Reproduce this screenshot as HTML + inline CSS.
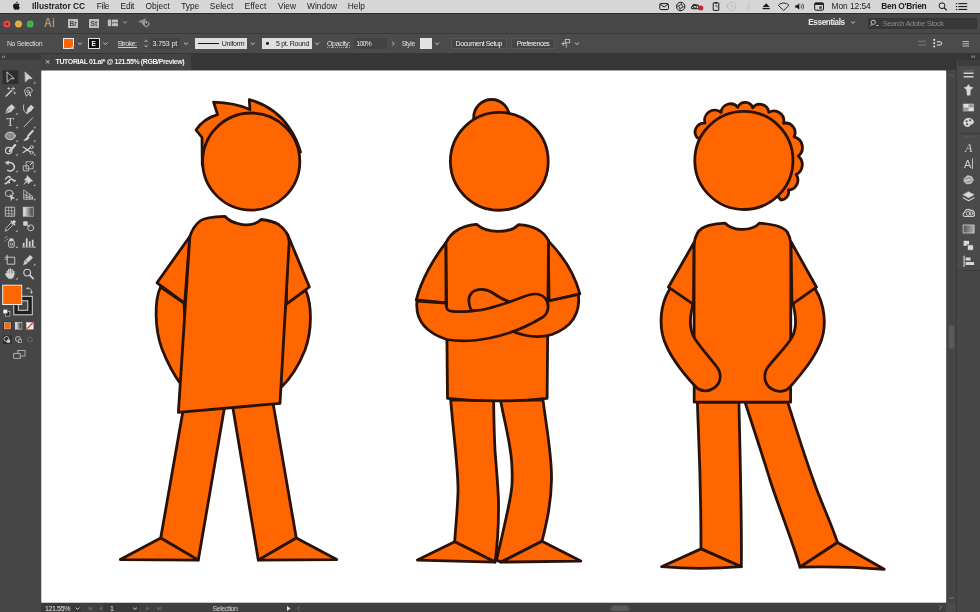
<!DOCTYPE html>
<html lang="en">
<head>
<meta charset="utf-8">
<title>Illustrator CC - TUTORIAL 01.ai</title>
<style>
*{box-sizing:border-box;margin:0;padding:0}
html,body{width:980px;height:612px;overflow:hidden;background:#474747}
body{position:relative;font-family:"Liberation Sans",sans-serif;font-size:8px;color:#e6e6e6}
.abs,.t{position:absolute}
.t{white-space:nowrap;line-height:10px;height:10px}
#menubar{position:absolute;left:0;top:0;width:980px;height:13px;background:#d6d6d6}
#menubar .t{color:#1c1c1c}
#appbar{position:absolute;left:0;top:13px;width:980px;height:21px;background:#484848;border-top:1px solid #2c2c2c}
#ctrl{position:absolute;left:0;top:33px;width:980px;height:20px;background:#4b4b4b;border-top:1px solid #3a3a3a}
#tabbar{position:absolute;left:0;top:53px;width:980px;height:17px;background:#363636}
#tab{position:absolute;left:41px;top:1px;width:150px;height:16px;background:#434343}
#tools{position:absolute;left:0;top:60px;width:41px;height:552px;background:#464646}
#toolshead{position:absolute;left:0;top:53px;width:41px;height:7px;background:#3b3b3b}
#vscroll{position:absolute;left:946px;top:70px;width:10px;height:542px;background:#454545;border-left:1px solid #3c3c3c}
#rpanel{position:absolute;left:956px;top:60px;width:24px;height:552px;background:#474747;border-left:1px solid #3a3a3a}
#rdock{position:absolute;left:958px;top:66px;width:22px;height:205px;background:#4a4a4a;border-bottom:1px solid #3a3a3a}
#status{position:absolute;left:41px;top:602px;width:905px;height:10px;background:#404040}
</style>
</head>
<body>
<div id="menubar"></div>
<div id="appbar"></div>
<div id="ctrl"></div>
<div id="tabbar"><div id="tab"></div></div>
<div id="toolshead"></div>
<div id="tools"></div>
<div id="vscroll"></div>
<div id="rpanel"></div>
<div id="rdock"></div>
<div id="status"></div>
<div class="abs" style="left:68.3px;top:19.2px;width:9.8px;height:8.8px;background:#bdbdbd"></div><div class="abs" style="left:89px;top:19.2px;width:9.8px;height:8.8px;background:#bdbdbd"></div><div class="abs" style="left:868px;top:18px;width:108.5px;height:11px;background:#383838;border:1px solid #343434"></div><div class="abs" style="left:62.9px;top:38.2px;width:11px;height:10.6px;background:#ff6600;border:1px solid #e8e8e8"></div><div class="abs" style="left:71.2px;top:45.9px;width:0;height:0;border-left:2.4px solid transparent;border-bottom:2.4px solid #fff"></div><div class="abs" style="left:88.2px;top:38.2px;width:11.8px;height:10.6px;background:#111;border:1px solid #e0e0e0"></div><div class="abs" style="left:150px;top:37.6px;width:30px;height:11.6px;background:#434343"></div><div class="abs" style="left:195.1px;top:38.2px;width:52px;height:10.6px;background:#dedede"></div><div class="abs" style="left:198.4px;top:42.7px;width:20.2px;height:1.8px;background:#111"></div><div class="abs" style="left:262.1px;top:38.2px;width:50px;height:10.6px;background:#dedede"></div><div class="abs" style="left:266px;top:42.1px;width:2.8px;height:2.8px;border-radius:50%;background:#111"></div><div class="abs" style="left:354.3px;top:37.6px;width:32.7px;height:11.6px;background:#434343"></div><div class="abs" style="left:420px;top:38.2px;width:12px;height:10.6px;background:#e2e2e2"></div><div class="abs" style="left:450.7px;top:38px;width:56.3px;height:11px;background:#454545;border:1px solid #565656"></div><div class="abs" style="left:511px;top:38px;width:43.8px;height:11px;background:#454545;border:1px solid #565656"></div>
<svg id="art" class="abs" style="left:0;top:0;will-change:transform" width="980" height="612" viewBox="0 0 980 612">
<rect x="41.3" y="70.5" width="904.9" height="532.2" fill="#fff"/>
<g fill="#ff6600" stroke="#2a1208" stroke-width="2.8" stroke-linejoin="round" stroke-linecap="round">
<!-- figure 1 -->
<path d="M160.5,287 C154.5,300 154.3,328 162,349 C167.500,363 174,375 181,384.500 L186,340 L184,303 Z"/>
<path d="M305.700,290 C312,305 312.300,330 305,350 C299,365 291,378 281,387.500 L280,340 L286,304 Z"/>
<path d="M184,405 L160.7,538 L198.3,560.1 L224.900,405 Z"/>
<path d="M160.7,538 L120.3,559.6 L198.3,560.1 Z"/>
<path d="M232.400,405 L258.3,560.1 L296.3,538 L272.5,400 Z"/>
<path d="M296.3,538 L336.8,559.6 L258.3,560.1 Z"/>
<path d="M189.800,236.500 L157,282.800 L184.7,303.200 Z"/>
<path d="M287.600,234.500 L309.400,287 L286.300,304.200 Z"/>
<path d="M224.8,216.300 C214,216.500 205,217.200 200,221 C195,225 191.500,231 189.800,237 L178.4,412.4 L280,403.400 L289.200,241.500 C288.600,235 285,229 279,224.800 C274,221.700 267,220.200 261.100,219.500 C252,228.500 232.500,225 224.800,216.300 Z"/>
<path d="M202.3,165 L202,137.500 L196,130 Q203.500,118.500 217.6,114.600 L213.6,102.200 Q235,102.800 249.900,109.600 L249.300,99.600 Q275,107 289,127.500 Q297,139 300.500,152 L251,161 Z"/>
<ellipse cx="251.2" cy="161.55" rx="48.6" ry="48.55"/>
<!-- figure 2 -->
<path d="M450.7,400 C453,430 458.5,470 458,492 C457.5,510 455.5,528 454.7,541.7 L495,562.1 C497.5,545 498.7,520 498.5,501 C498,485 496,465 495,450 C494.2,435 493.8,415 493.6,400 Z"/>
<path d="M454.7,541.7 L417.4,560.1 L495,562.1 Z"/>
<path d="M500.5,400 C504,420 510,440 511.7,462 C512.5,475 512.3,485 511.3,491 C509.5,505 503,532 496.5,560.1 L501.1,562.1 L542,541.3 C546,525 551,505 551.5,480 C552,455 546,425 543,400 Z"/>
<path d="M542,541.3 L580.8,561.1 L501.1,562.1 Z"/>
<path d="M446,242.7 C433.500,258.500 421,280.500 416.3,300 L446,303 Z"/>
<path d="M548.1,240.6 C563,256 575,275 579.8,293.8 L549.1,300.9 Z"/>
<path d="M476.6,224.3 C465,225 452,230 446,242.7 L447.5,398.3 Q497,403.5 547.1,398.3 L548.5,240.6 C543,230 532,225.5 518.5,224.7 C510,233.5 487,234 476.6,224.3 Z"/>
<path d="M578.5,294.5 C580,310 575,326 552,334.5 C540,338 526,337 512.4,331.3 L530,300 L549,301 Z"/>
<path d="M471.200,310.500 C468,303 468,296.500 472,292.500 C477,288 486,288.300 493,293 C499,297.300 504.500,300.300 510.300,301.900 L495,311 Z"/>
<path d="M417,301 C415.5,315 421,331 447,339.5 C460,342 475,341 490,338 C510,334 530,325 543,317 C549,313 549.5,303 545.5,298.5 C541.5,294 535,293.5 530.7,294.5 C524,296 517,299.5 510.3,301.7 C500,305 490,308.5 481.7,309.8 C470,311.500 458,312.200 451,311.200 C448,310.800 446.500,309 446.300,306 L446,303 Z"/>
<circle cx="491.6" cy="117.4" r="17.9"/>
<circle cx="499.3" cy="161.35" r="48.9"/>
<!-- figure 3 -->
<path d="M697.4,402 C698,430 701,470 701,548.9 L741.3,566.7 C742,530 740,450 738.9,402 Z"/>
<path d="M701,548.9 L661.5,566.7 Q700,570 741.3,566.7 Z"/>
<path d="M745,402 C754,430 764,460 770,480 C778,505 792,540 800,567.2 L837.5,542.5 C830,520 820,500 813.3,480 C804,455 795,425 787.600,402 Z"/>
<path d="M837.5,542.5 L884.2,569.3 Q840,566 800,567.2 Z"/>
<path d="M725.2,223.200 C719,223.600 713,224.500 709,225.400 C704,226.700 699.500,229.500 697.500,233 C695.500,236.500 694.500,240 694.000,244.400 L694.200,402.200 L790.600,402.200 L790.900,243.400 C790.300,239 789.200,235.500 787.300,232 C784.800,228.800 780.500,226.800 775.500,225.500 C771.500,224.500 765.500,223.500 759.400,223.100 C752,231.300 733.500,231.800 725.200,223.200 Z"/>
<path d="M673,280 L669.6,289.2 C660,305 659,325 664,340 C670,357 682,372 695,386 C700,392 708,392 714,388 C721,383 722,375 717.4,367.6 C710,358 701,348 695,339 C690,331 689,320 692.600,306 L692,295 Z"/>
<path d="M812,280 L815.3,289.2 C825,305 826.5,325 821.5,340 C815.5,357 803,372 790,387 C785,392.5 777,392.5 771,388.5 C764,383.5 763,375 767.5,367.6 C775,358 785,348 791,339 C796,331 797,320 793.400,306 L794,295 Z"/>
<path d="M693.9,242.7 L668.4,287.2 L693.5,304.4 Z"/>
<path d="M791,241.7 L816.5,287.2 L792,304.4 Z"/>
<path d="M696.9,137.5 A9,9 0 0 1 705.1,123.2 A10,10 0 0 1 721,112.4 A9.5,9.5 0 0 1 737.8,107.3 A8,8 0 0 1 752.7,107.8 A9,9 0 0 1 768.8,112.3 A10,10 0 0 1 783.5,123.3 A9.5,9.500 0 0 1 794.1,136.8 A11,11 0 0 1 798.2,156.1 A11,11 0 0 1 796.2,174.5 A10,10 0 0 1 788.4,190 A8,8 0 0 1 781,200 L744,160 Z"/>
<circle cx="743.9" cy="160.4" r="49.1"/>
</g>
<g fill="#1a1a1a" stroke="none">
<path d="M16.1,3.9 C16.7,3.9 17.2,3.4 18,3.5 C18.6,3.5 19.2,3.8 19.6,4.4 C18.4,5.2 18.6,6.9 19.9,7.4 C19.6,8.2 19.2,8.9 18.700,9.400 C18.300,9.900 17.800,9.900 17.300,9.700 C16.800,9.400 16.300,9.400 15.800,9.700 C15.300,9.900 14.900,9.900 14.500,9.500 C13.200,8.200 12.400,5.700 13.600,4.300 C14.200,3.600 15,3.400 15.600,3.600 C15.800,3.700 16,3.900 16.100,3.900 Z"/>
<path d="M17.7,1.4 C17.8,2.3 17.000,3.300 16.000,3.300 C15.900,2.400 16.700,1.500 17.700,1.400 Z"/>
</g>
<g fill="none" stroke="#1a1a1a" stroke-width="1">
<rect x="659.8" y="3.6" width="8.6" height="6" rx="0.8"/><path d="M660.2,4.2 L664.1,7 L668,4.2"/>
<circle cx="680.7" cy="6.5" r="4.2"/><circle cx="680.7" cy="6.500" r="1.8" stroke-width="0.8"/><path d="M680.7,2.300 L682,5 M684.900,6.500 L682.300,7.300 M680.700,10.700 L679.400,8 M676.500,6.500 L679.100,5.700" stroke-width="0.7"/>
<path d="M692.8,8.800 C691.200,8.800 691,6.600 692.500,6.200 C692.600,4.600 694.800,4.000 695.800,5.200 C697.400,4.400 699,5.600 698.600,7.000 C699.700,7.400 699.400,8.800 698.300,8.800 Z" stroke-width="1.1"/><circle cx="695" cy="6.800" r="1.500" stroke-width="0.900"/>
</g>
<circle cx="700.8" cy="7.900" r="2.500" fill="#c9252b"/>
<g fill="none" stroke="#1a1a1a" stroke-width="1">
<rect x="713.2" y="2.900" width="5.600" height="7.500" rx="0.500"/><path d="M714.7,2.900 L717.300,2.900" stroke-width="1.400"/><path d="M715.2,5.800 h1.800 v1.600" stroke-width="0.700"/>
</g>
<g fill="none" stroke="#b9b9b9" stroke-width="0.9"><circle cx="731.6" cy="6.300" r="4.200"/><path d="M731.6,4 L731.600,6.400 L733.200,7.300"/><path d="M726.500,5.500 l1,1.300 l1.200,-1.100" stroke-width="0.700"/></g>
<path d="M747,4.200 L750.200,8.300 L748.500,10 L748.500,2.600 L750.200,4.300 L747,8.400" fill="none" stroke="#c4c4c4" stroke-width="0.700"/>
<path d="M762.700,7 L766.200,3.200 L769.700,7 Z" fill="#1a1a1a"/><rect x="762.700" y="7.900" width="7" height="1.300" fill="#1a1a1a"/>
<path d="M778.300,5.300 C781.300,2.300 786,2.300 789,5.300 L783.650,10.500 Z" fill="none" stroke="#1a1a1a" stroke-width="0.900" stroke-linejoin="round"/>
<path d="M795.300,5.300 L797,5.300 L799.300,3.200 L799.300,9.800 L797,7.700 L795.300,7.700 Z" fill="#1a1a1a"/><path d="M800.800,4.800 C801.800,5.800 801.800,7.200 800.800,8.200 M802.300,3.600 C804,5.300 804,7.700 802.300,9.400" fill="none" stroke="#1a1a1a" stroke-width="0.800"/>
<rect x="814.700" y="2.900" width="8.800" height="7.300" rx="1.200" fill="none" stroke="#1a1a1a" stroke-width="1"/><rect x="814.700" y="2.900" width="8.800" height="2" fill="#1a1a1a"/><rect x="819.2" y="6.200" width="2.800" height="2.600" fill="#555"/>
<circle cx="942" cy="5.700" r="2.900" fill="none" stroke="#1a1a1a" stroke-width="1"/><path d="M944.100,7.800 L946.800,10.400" stroke="#1a1a1a" stroke-width="1.200" fill="none"/>
<g fill="#1a1a1a"><rect x="958.400" y="3.100" width="8.800" height="1.100"/><rect x="958.400" y="6" width="8.800" height="1.100"/><rect x="958.400" y="8.900" width="8.800" height="1.100"/><rect x="955.800" y="3.100" width="1.400" height="1.100"/><rect x="955.800" y="6" width="1.400" height="1.100"/><rect x="955.800" y="8.900" width="1.400" height="1.100"/></g>
<circle cx="6.9" cy="24" r="3.500" fill="#e24a42"/><circle cx="6.9" cy="24" r="1.300" fill="#8e1f1c"/>
<circle cx="18.5" cy="24" r="3.500" fill="#e3b53a"/><circle cx="18.5" cy="24" r="1.200" fill="#dca62e"/>
<circle cx="30.2" cy="24" r="3.500" fill="#3fb649"/><circle cx="30.2" cy="24" r="1.200" fill="#39aa42"/>
<g fill="#bdbdbd"><rect x="107.8" y="19.600" width="3.400" height="6.600"/><rect x="112" y="19.600" width="6" height="2.800"/><rect x="112" y="23.200" width="6" height="3"/></g>
<path d="M123.0,21.4 L125.0,23.2 L127.0,21.4" fill="none" stroke="#b0b0b0" stroke-width="0.9"/>
<g fill="#8f8f8f"><path d="M138,21.500 L146,18.300 L144.300,26 L142.200,23.600 Z"/></g><path d="M144.800,21.800 a2.600,2.600 0 1 0 3,0 M146.300,20.800 v3" fill="none" stroke="#c6c6c6" stroke-width="0.9"/>
<path d="M851.0,21.5 L853.0,23.3 L855.0,21.5" fill="none" stroke="#d0d0d0" stroke-width="0.9"/>
<circle cx="873.3" cy="22.300" r="2.100" fill="none" stroke="#cfcfcf" stroke-width="0.9"/><path d="M870,26.300 L872.100,24.100 M876.300,25.500 h2.300" stroke="#cfcfcf" stroke-width="0.9" fill="none"/>
<path d="M71.500,48.300 L73.600,46.200 L73.600,48.300 Z" fill="#fff" stroke="#333" stroke-width="0.3"/>
<path d="M78.0,42.7 L80.0,44.5 L82.0,42.7" fill="none" stroke="#d4d4d4" stroke-width="0.9"/>
<path d="M103.4,42.7 L105.4,44.5 L107.4,42.7" fill="none" stroke="#d4d4d4" stroke-width="0.9"/>
<path d="M184.0,42.7 L186.0,44.5 L188.0,42.7" fill="none" stroke="#d4d4d4" stroke-width="0.9"/>
<path d="M250.8,42.7 L252.8,44.5 L254.8,42.7" fill="none" stroke="#d4d4d4" stroke-width="0.9"/>
<path d="M315.2,42.7 L317.2,44.5 L319.2,42.7" fill="none" stroke="#d4d4d4" stroke-width="0.9"/>
<path d="M435.2,42.7 L437.2,44.5 L439.2,42.7" fill="none" stroke="#d4d4d4" stroke-width="0.9"/>
<path d="M575.0,42.7 L577.0,44.5 L579.0,42.7" fill="none" stroke="#d4d4d4" stroke-width="0.9"/>
<path d="M144.600,42 L146,40.300 L147.400,42 M144.600,45.300 L146,47 L147.400,45.300" fill="none" stroke="#d4d4d4" stroke-width="0.8"/>
<path d="M392.2,41.600 L394,43.600 L392.200,45.600" fill="none" stroke="#d4d4d4" stroke-width="0.9"/>
<g fill="none" stroke="#cfcfcf" stroke-width="0.8"><rect x="565.3" y="39.500" width="4.400" height="3.300"/><path d="M561.3,43.600 h5 M566.300,43.600 v4.200 M563.300,41.500 v4.500"/></g>
<g fill="#6a6a6a"><rect x="918" y="40.700" width="8" height="1.500"/><rect x="918" y="44.300" width="8" height="1.500"/></g>
<g fill="#ededed"><rect x="933.4" y="39" width="1.700" height="1.700"/><rect x="933.400" y="42.300" width="1.700" height="1.700"/><rect x="933.400" y="45.600" width="1.700" height="1.700"/></g><path d="M936.800,41.800 h3.300 a1.500,1.500 0 0 1 0,3.200 h-3.300" fill="none" stroke="#ededed" stroke-width="1"/>
<g fill="#bdbdbd"><rect x="962.5" y="41.100" width="6.500" height="1"/><rect x="962.500" y="43.300" width="6.500" height="1"/><rect x="962.500" y="45.500" width="6.500" height="1"/></g>
<path d="M46,60.200 L49.300,63.500 M49.300,60.200 L46,63.500" stroke="#e0e0e0" stroke-width="0.9" fill="none"/>
<g fill="#9a9a9a"><rect x="2.2" y="55.700" width="0.900" height="2.400"/><rect x="4.200" y="55.700" width="0.900" height="2.400"/><rect x="971.6" y="55.400" width="1" height="2.600"/><rect x="973.800" y="55.400" width="1" height="2.600"/></g>
<rect x="2.600" y="70.300" width="15.700" height="13.700" fill="#2e2e2e"/>
<g transform="translate(10.2,77.1)" fill="none" stroke="#d2d2d2" stroke-width="1" stroke-linejoin="round" stroke-linecap="round"><path d="M-3,-5 L4,1.500 L0.500,1.700 L-2.700,4.700 Z" stroke-width="0.9"/></g>
<g transform="translate(28.2,77.1)" fill="none" stroke="#d2d2d2" stroke-width="1" stroke-linejoin="round" stroke-linecap="round"><path d="M-3,-5 L4,1.500 L0.500,1.700 L-2.700,4.700 Z" fill="#d2d2d2" stroke-width="0.6"/></g>
<path d="M35.4,81.5 L35.4,83.5 L33.4,83.5 Z" fill="#cacaca"/>
<g transform="translate(10.2,91.5)" fill="none" stroke="#d2d2d2" stroke-width="1" stroke-linejoin="round" stroke-linecap="round"><path d="M-4,4.500 L1.500,-1" stroke-width="1.500"/><path d="M3,-4.500 v3 M1.500,-3 h3 M4.500,0.500 v2 M3.500,1.500 h2 M-1.500,-4 v2 M-2.500,-3 h2" stroke-width="0.700"/></g>
<g transform="translate(28.2,91.5)" fill="none" stroke="#d2d2d2" stroke-width="1" stroke-linejoin="round" stroke-linecap="round"><path d="M-3.500,-0.500 C-3.500,-5 4,-5 4,-1 C4,2 -1,2 -1.500,0 C-2,-1.500 1,-2 1,0 L2.500,4.500 L0,2.500 L-1.500,4.500 Z" stroke-width="0.900"/></g>
<g transform="translate(10.2,108.5)" fill="none" stroke="#d2d2d2" stroke-width="1" stroke-linejoin="round" stroke-linecap="round"><path d="M-4.500,4.500 L-2.700,-0.500 L1.500,-4 L4.500,-1 L1,3 Z" fill="#d2d2d2" stroke-width="0.600"/><path d="M-4.500,4.500 L-0.500,0.500" stroke="#464646" stroke-width="0.800"/></g>
<path d="M17.6,112.4 L17.6,114.4 L15.600000000000001,114.4 Z" fill="#cacaca"/>
<g transform="translate(28.2,108.5)" fill="none" stroke="#d2d2d2" stroke-width="1" stroke-linejoin="round" stroke-linecap="round"><path d="M-1.500,4.500 L-0.300,0 L3,-3.500 L5.500,-1 L2.500,2.700 Z" fill="#d2d2d2" stroke-width="0.600"/><path d="M-4.500,-3.500 C-5.500,1 -4,4 -0.500,5" stroke-width="0.900"/></g>
<text x="10.2" y="126.300" font-family="Liberation Serif,serif" font-size="12.500" fill="#d2d2d2" text-anchor="middle">T</text>
<path d="M17.6,126.19999999999999 L17.6,128.2 L15.600000000000001,128.2 Z" fill="#cacaca"/>
<g transform="translate(28.2,122.2)" fill="none" stroke="#d2d2d2" stroke-width="1" stroke-linejoin="round" stroke-linecap="round"><path d="M-4,4.500 L4.500,-4.500" stroke-width="0.900"/></g>
<path d="M35.4,126.19999999999999 L35.4,128.2 L33.4,128.2 Z" fill="#cacaca"/>
<g transform="translate(10.2,135.9)" fill="none" stroke="#d2d2d2" stroke-width="1" stroke-linejoin="round" stroke-linecap="round"><ellipse cx="0" cy="0" rx="5" ry="3.800" fill="#8c8c8c" stroke-width="1"/></g>
<path d="M17.6,139.8 L17.6,141.8 L15.600000000000001,141.8 Z" fill="#cacaca"/>
<g transform="translate(28.2,135.9)" fill="none" stroke="#d2d2d2" stroke-width="1" stroke-linejoin="round" stroke-linecap="round"><path d="M4.500,-5 L0,0" stroke-width="2.100"/><path d="M-0.500,0.500 C-1.500,1 -2.500,3 -4.500,4.500 C-2,5 0.500,3.500 1,1.500 Z" fill="#d2d2d2" stroke-width="0.500"/></g>
<path d="M35.4,139.8 L35.4,141.8 L33.4,141.8 Z" fill="#cacaca"/>
<g transform="translate(10.2,149.6)" fill="none" stroke="#d2d2d2" stroke-width="1" stroke-linejoin="round" stroke-linecap="round"><circle cx="-1.500" cy="1" r="3.200" stroke-width="1.200"/><path d="M-0.500,1.500 L5,-4.500" stroke-width="2.200"/></g>
<path d="M17.6,153.5 L17.6,155.5 L15.600000000000001,155.5 Z" fill="#cacaca"/>
<g transform="translate(28.2,149.6)" fill="none" stroke="#d2d2d2" stroke-width="1" stroke-linejoin="round" stroke-linecap="round"><circle cx="3.500" cy="-2.500" r="1.500" stroke-width="0.800"/><circle cx="3.500" cy="3" r="1.500" stroke-width="0.800"/><path d="M2.200,-1.800 L-5,3 M2.200,2.300 L-5,-2.500" stroke-width="1.200"/></g>
<path d="M35.4,153.5 L35.4,155.5 L33.4,155.5 Z" fill="#cacaca"/>
<g transform="translate(10.2,166.3)" fill="none" stroke="#d2d2d2" stroke-width="1" stroke-linejoin="round" stroke-linecap="round"><path d="M-2.500,-3.500 C2,-5 5,-1 4,2 C3,4.500 0,5.500 -2.500,4" stroke-width="1.500"/><path d="M-5,-3.800 L-1.500,-5.500 L-1.800,-1.500 Z" fill="#d2d2d2" stroke-width="0.400"/></g>
<path d="M17.6,170.2 L17.6,172.2 L15.600000000000001,172.2 Z" fill="#cacaca"/>
<g transform="translate(28.2,166.3)" fill="none" stroke="#d2d2d2" stroke-width="1" stroke-linejoin="round" stroke-linecap="round"><rect x="-4.500" y="-0.500" width="5" height="5" stroke-width="0.800"/><rect x="-2" y="-4.500" width="7" height="7" stroke-width="0.800" stroke-dasharray="1.200 0.800"/><path d="M2,-1.500 L4.500,-4"/></g>
<path d="M35.4,170.2 L35.4,172.2 L33.4,172.2 Z" fill="#cacaca"/>
<g transform="translate(10.2,180)" fill="none" stroke="#d2d2d2" stroke-width="1" stroke-linejoin="round" stroke-linecap="round"><path d="M-5,3.500 C-3,4.500 -1,-1 1,-1 C3,-1 3,2 5,0.500" stroke-width="1.600"/><path d="M-4.500,-1 C-3,-4 -1,-4 0,-2.500" stroke-width="1.400"/><circle cx="-1" cy="2.500" r="1" fill="#d2d2d2" stroke="none"/></g>
<path d="M17.6,183.9 L17.6,185.9 L15.600000000000001,185.9 Z" fill="#cacaca"/>
<g transform="translate(28.2,180)" fill="none" stroke="#d2d2d2" stroke-width="1" stroke-linejoin="round" stroke-linecap="round"><path d="M-1,-4.500 L4.500,1 L2.500,1.500 L0,4 L-0.500,1.500 L-4.500,4.500 L-1.500,0.500 L-4,0 L-1.500,-2.500 Z" fill="#d2d2d2" stroke-width="0.400"/></g>
<path d="M35.4,183.9 L35.4,185.9 L33.4,185.9 Z" fill="#cacaca"/>
<g transform="translate(10.2,194.4)" fill="none" stroke="#d2d2d2" stroke-width="1" stroke-linejoin="round" stroke-linecap="round"><ellipse cx="-1" cy="-1" rx="4" ry="3.200" stroke-width="0.900"/><path d="M0,0 L4.500,4 L2,4 L1,6 Z" fill="#d2d2d2" stroke-width="0.400"/></g>
<path d="M17.6,198.3 L17.6,200.3 L15.600000000000001,200.3 Z" fill="#cacaca"/>
<g transform="translate(28.2,194.4)" fill="none" stroke="#d2d2d2" stroke-width="1" stroke-linejoin="round" stroke-linecap="round"><path d="M-4.500,4.500 L-4.500,-4.500 L4.500,2 L4.500,4.500 Z M-4.500,0 L4.500,3.200 M-4.500,2.500 L4.500,4 M-1.500,-2.300 L-1.500,4.500 M1.500,-0.200 L1.500,4.500" stroke-width="0.700"/></g>
<path d="M35.4,198.3 L35.4,200.3 L33.4,200.3 Z" fill="#cacaca"/>
<g transform="translate(10.2,211.7)" fill="none" stroke="#d2d2d2" stroke-width="1" stroke-linejoin="round" stroke-linecap="round"><rect x="-4.500" y="-4.500" width="9" height="9" stroke-width="0.800"/><path d="M-4.500,-1 C-2,-2.500 2,0.500 4.500,-1 M-4.500,2 C-2,0.500 2,3.500 4.500,2 M-1.500,-4.500 C-3,-2 0,2 -1.500,4.500 M1.500,-4.500 C0,-2 3,2 1.500,4.500" stroke-width="0.600"/></g>
<defs><linearGradient id="gr1" x1="0" x2="1" y1="0" y2="0"><stop offset="0" stop-color="#f2f2f2"/><stop offset="1" stop-color="#3a3a3a"/></linearGradient><linearGradient id="gr2" x1="0" x2="1" y1="0" y2="0"><stop offset="0" stop-color="#fafafa"/><stop offset="1" stop-color="#222"/></linearGradient></defs>
<rect x="23.2" y="207.200" width="10" height="9" fill="url(#gr1)" stroke="#d2d2d2" stroke-width="0.700"/>
<g transform="translate(10.2,225.8)" fill="none" stroke="#d2d2d2" stroke-width="1" stroke-linejoin="round" stroke-linecap="round"><path d="M-5,5 L-4,2 L1,-3 L3,-1 L-2,4 Z" stroke-width="0.800"/><path d="M1,-4.500 L4.500,-1 M2,-3 L4,-5 L5,-4 L3,-2" stroke-width="1.300"/></g>
<path d="M17.6,229.7 L17.6,231.7 L15.600000000000001,231.7 Z" fill="#cacaca"/>
<g transform="translate(28.2,225.8)" fill="none" stroke="#d2d2d2" stroke-width="1" stroke-linejoin="round" stroke-linecap="round"><rect x="-5" y="-4.500" width="4.500" height="4.500" rx="1" fill="#d2d2d2" stroke="none"/><circle cx="2.500" cy="2" r="3" stroke-width="0.900"/><path d="M-2.500,-2 L1.500,1" stroke-width="0.900"/></g>
<g transform="translate(10.2,242.2)" fill="none" stroke="#d2d2d2" stroke-width="1" stroke-linejoin="round" stroke-linecap="round"><rect x="-1.500" y="-1.500" width="5.500" height="6.500" rx="1" stroke-width="0.900"/><path d="M-0.500,-3.500 h3.500 v2 h-3.500 Z" fill="#d2d2d2" stroke-width="0.400"/><circle cx="1.300" cy="2" r="1.200" stroke-width="0.700"/><path d="M-5,-4.500 v0.100 M-3,-3 v0.100 M-5,-1.500 v0.100 M-3.500,-5.500 v0.100" stroke-width="1.100"/></g>
<path d="M17.6,246.1 L17.6,248.1 L15.600000000000001,248.1 Z" fill="#cacaca"/>
<g transform="translate(28.2,242.2)" fill="none" stroke="#d2d2d2" stroke-width="1" stroke-linejoin="round" stroke-linecap="round"><path d="M-4.500,4.500 v-4 M-1.500,4.500 v-8.500 M1.500,4.500 v-5.500 M4.500,4.500 v-7" stroke-width="1.700" stroke-linecap="butt"/><path d="M-6,5 h12" stroke-width="0.600"/></g>
<path d="M35.4,246.1 L35.4,248.1 L33.4,248.1 Z" fill="#cacaca"/>
<g transform="translate(10.2,259.7)" fill="none" stroke="#d2d2d2" stroke-width="1" stroke-linejoin="round" stroke-linecap="round"><path d="M-3,-4.500 v2 M-5,-2.500 h9.500 v7 h-7.500 v-7" stroke-width="0.900"/><path d="M-5,-0.500 h2" stroke-width="0.800"/></g>
<g transform="translate(28.2,259.7)" fill="none" stroke="#d2d2d2" stroke-width="1" stroke-linejoin="round" stroke-linecap="round"><path d="M-4.500,5 L-3.500,1 L2,-4.500 L4.500,-2 L-1,3.500 Z" fill="#d2d2d2" stroke-width="0.500"/><path d="M-2.500,1 L1,4" stroke="#464646" stroke-width="0.700"/></g>
<path d="M35.4,263.6 L35.4,265.6 L33.4,265.6 Z" fill="#cacaca"/>
<g transform="translate(10.2,273.6)" fill="none" stroke="#d2d2d2" stroke-width="1" stroke-linejoin="round" stroke-linecap="round"><path d="M-3,1 L-3,-2.500 M-1.500,0 L-1.500,-4.300 M0.200,0 L0.200,-4.800 M1.900,0 L1.900,-4 M3.600,1 L3.600,-2.500" stroke-width="1.300"/><path d="M-3.600,0 L3.900,0 L3.500,3 L2,5 L-1.500,5 L-3.500,3 L-5,0.500 L-4,0 Z" fill="#d2d2d2" stroke-width="0.500"/></g>
<path d="M17.6,277.5 L17.6,279.5 L15.600000000000001,279.5 Z" fill="#cacaca"/>
<g transform="translate(28.2,273.6)" fill="none" stroke="#d2d2d2" stroke-width="1" stroke-linejoin="round" stroke-linecap="round"><circle cx="-1" cy="-1" r="3.400" stroke-width="1.100"/><path d="M1.500,1.500 L5,5" stroke-width="1.500"/></g>
<rect x="13.800" y="296.300" width="18.500" height="18.500" fill="#1f1f1f" stroke="#d8d8d8" stroke-width="1"/><rect x="18.300" y="300.800" width="9.500" height="9.500" fill="#464646" stroke="#d8d8d8" stroke-width="1"/>
<rect x="2.700" y="285.200" width="19" height="19.300" fill="#ff6600" stroke="#ececec" stroke-width="1"/>
<path d="M27.500,288.500 C30,287.500 32,289.500 31.500,292.500" fill="none" stroke="#c8c8c8" stroke-width="0.900"/><path d="M26,288.700 l2.200,-1.800 l0.300,2.600 Z M30,291.500 l3,0.200 l-1.700,2.200 Z" fill="#c8c8c8"/>
<rect x="5.300" y="311.500" width="4.600" height="4.600" fill="#1f1f1f" stroke="#e0e0e0" stroke-width="0.600"/><rect x="3" y="309.200" width="4.600" height="4.600" fill="#f2f2f2" stroke="#222" stroke-width="0.400"/>
<rect x="3" y="321.500" width="8.700" height="8.700" fill="#2d2d2d"/><rect x="4.200" y="322.700" width="6.300" height="6.300" fill="#ff6600" stroke="#e0e0e0" stroke-width="0.500"/>
<rect x="15.300" y="322.500" width="6.600" height="6.600" fill="url(#gr2)" stroke="#e0e0e0" stroke-width="0.600"/>
<rect x="26.600" y="322.500" width="6.600" height="6.600" fill="#f4f4f4" stroke="#e0e0e0" stroke-width="0.600"/><path d="M26.600,329.100 L33.200,322.500" stroke="#e23a2a" stroke-width="1.300"/>
<rect x="3" y="335.500" width="8.700" height="8.700" fill="#2d2d2d"/>
<g fill="none" stroke="#d2d2d2" stroke-width="0.800"><circle cx="6.500" cy="339" r="2.500"/><rect x="6.800" y="339.700" width="3.300" height="3" fill="#d2d2d2" stroke="none"/><circle cx="18" cy="339" r="2.500"/><rect x="18.300" y="339.700" width="3.300" height="3" fill="#464646" stroke-width="0.600"/></g>
<g fill="none" stroke="#6e6e6e" stroke-width="0.800"><circle cx="30" cy="339.500" r="2.500"/></g>
<g fill="none" stroke="#c4c4c4" stroke-width="0.800"><rect x="17.800" y="350.500" width="7.200" height="5.500"/><rect x="13.700" y="353.500" width="6.500" height="4.800" fill="#464646"/></g>
<rect x="958" y="60" width="22" height="6" fill="#3d3d3d"/>
<rect x="958" y="133" width="22" height="1" fill="#3a3a3a"/><rect x="963" y="136.500" width="12" height="0.800" fill="#5c5c5c"/>
<g transform="translate(968.6,75.3)" fill="none" stroke="#cfcfcf" stroke-width="1" stroke-linejoin="round" stroke-linecap="round"><path d="M-5,-2 h10 M-5,1.500 h10" stroke-width="1.500" stroke-linecap="butt"/><path d="M-5,-4.500 h10" stroke-width="0.500" stroke="#8a8a8a"/></g>
<g transform="translate(968.6,90)" fill="none" stroke="#cfcfcf" stroke-width="1" stroke-linejoin="round" stroke-linecap="round"><path d="M-1.500,5 L-1.800,0 L-4.500,-2.500 L-2,-3 L0,-5.500 L1.500,-3 L4.500,-2.500 L1.800,0 L1.500,5 Z" fill="#d8d8d8" stroke-width="0.500"/></g>
<g transform="translate(968.6,107.5)" fill="none" stroke="#cfcfcf" stroke-width="1" stroke-linejoin="round" stroke-linecap="round"><rect x="-5" y="-3.500" width="10" height="7" fill="#9a9a9a" stroke-width="0.600"/><rect x="-5" y="-3.500" width="5" height="3.500" fill="#e0e0e0" stroke="none"/><rect x="0" y="0" width="5" height="3.500" fill="#e0e0e0" stroke="none"/></g>
<g transform="translate(968.6,122.7)" fill="none" stroke="#cfcfcf" stroke-width="1" stroke-linejoin="round" stroke-linecap="round"><path d="M-5,0.500 C-5,-3 -2,-5 1,-4.500 C4,-4 5.500,-2 5,0 C4.500,2 2,1 1.500,2.500 C1,4 -1,4.500 -3,3.500 C-4.500,2.700 -5,1.500 -5,0.500 Z" fill="#d8d8d8" stroke-width="0.500"/><circle cx="-2" cy="-1.500" r="1" fill="#474747" stroke="none"/><circle cx="1.500" cy="-2.500" r="1" fill="#474747" stroke="none"/><circle cx="-1.500" cy="1.500" r="1" fill="#474747" stroke="none"/></g>
<text x="968.6" y="152.300" font-family="Liberation Serif,serif" font-style="italic" font-size="12" fill="#cfcfcf" text-anchor="middle">A</text>
<text x="967.6" y="167.800" font-family="Liberation Sans,sans-serif" font-size="11" fill="#cfcfcf" text-anchor="middle">A</text><rect x="972.1" y="158.500" width="0.900" height="10.500" fill="#cfcfcf"/>
<g transform="translate(968.6,180)" fill="none" stroke="#cfcfcf" stroke-width="1" stroke-linejoin="round" stroke-linecap="round"><path d="M-4.500,-1.500 L-1,-4.500 L3,-3.500 L5,0 L2.500,3.500 L-2,4 L-4.500,1.500 Z" fill="#c4c4c4" stroke-width="0.500"/><path d="M-3,-1 L1,-2.500 L3.500,0.500 M-2,2 L2,1.500" stroke="#6a6a6a" stroke-width="0.800"/></g>
<g transform="translate(968.6,196.3)" fill="none" stroke="#cfcfcf" stroke-width="1" stroke-linejoin="round" stroke-linecap="round"><path d="M0,-4.500 L5.500,-1.500 L0,1.500 L-5.500,-1.500 Z" fill="#d8d8d8" stroke-width="0.500"/><path d="M-5.500,1.500 L0,4.500 L5.500,1.500" stroke-width="1.100"/></g>
<g transform="translate(968.6,213)" fill="none" stroke="#cfcfcf" stroke-width="1" stroke-linejoin="round" stroke-linecap="round"><path d="M-3.500,3.500 C-6,3.500 -6.300,0.200 -4,-0.500 C-3.800,-3.500 0,-4.500 1.500,-2.500 C4,-3.500 6.300,-1.500 5.500,1 C6.500,2 5.500,3.500 4,3.500 Z" stroke-width="1.200"/><circle cx="-0.500" cy="0.500" r="2" stroke-width="0.900"/><circle cx="2.500" cy="0.500" r="1.700" stroke-width="0.900"/></g>
<rect x="963.1" y="225" width="11" height="8" fill="url(#gr3)" stroke="#cfcfcf" stroke-width="0.800"/><defs><linearGradient id="gr3" x1="0" x2="1"><stop offset="0" stop-color="#555"/><stop offset="1" stop-color="#aaa"/></linearGradient></defs>
<g transform="translate(968.6,245.3)" fill="none" stroke="#cfcfcf" stroke-width="1" stroke-linejoin="round" stroke-linecap="round"><rect x="-5" y="-4.500" width="5.500" height="5" fill="#d8d8d8" stroke="none"/><rect x="-1" y="-0.500" width="6" height="5.500" fill="#d8d8d8" stroke="#474747" stroke-width="0.800"/></g>
<g transform="translate(968.6,261)" fill="none" stroke="#cfcfcf" stroke-width="1" stroke-linejoin="round" stroke-linecap="round"><path d="M-4.500,-5 v10.500" stroke-width="1.200"/><rect x="-3" y="-3.500" width="5" height="3" fill="#d8d8d8" stroke="none"/><rect x="-3" y="1" width="8.500" height="3" fill="#d8d8d8" stroke="none"/></g>
<rect x="41" y="603.500" width="40" height="8.500" fill="#3a3a3a"/><rect x="104" y="603.500" width="35" height="8.500" fill="#3a3a3a"/>
<rect x="948.700" y="325" width="5.500" height="24" rx="2.700" fill="#5a5a5a"/>
<rect x="611" y="605.600" width="18" height="5.500" rx="2.700" fill="#5a5a5a"/>
<path d="M949.300,76.500 L951.300,74.500 L953.300,76.500" fill="none" stroke="#6a6a6a" stroke-width="0.900"/>
<path d="M949.300,597 L951.300,599 L953.300,597" fill="none" stroke="#8a8a8a" stroke-width="0.900"/>
<path d="M939.500,605.500 L941.500,607.500 L939.500,609.500" fill="none" stroke="#8a8a8a" stroke-width="0.900"/>
<rect x="946" y="602.500" width="10" height="9.500" fill="#4a4a4a"/>
<path d="M75.5,607.6 L77.5,609.4 L79.5,607.6" fill="none" stroke="#cfcfcf" stroke-width="0.9"/>
<path d="M133.0,607.6 L135.0,609.4 L137.0,607.6" fill="none" stroke="#cfcfcf" stroke-width="0.9"/>
<g fill="#6c6c6c"><path d="M92,606.500 L89.500,608.500 L92,610.500 Z M88.500,606.500 h0.800 v4 h-0.800 Z M102,606.500 L99.500,608.500 L102,610.500 Z M146.500,606.500 L149,608.500 L146.500,610.500 Z M157.500,606.500 L160,608.500 L157.500,610.500 Z M160.500,606.500 h0.800 v4 h-0.800 Z"/></g>
<path d="M287,606 L290.500,608.500 L287,611 Z" fill="#e0e0e0"/>
<path d="M299.500,606.500 L297.500,608.500 L299.500,610.500" fill="none" stroke="#7a7a7a" stroke-width="0.900"/>
</svg>
<div id="menutext" style="position:absolute;left:0;top:0;width:980px;height:612px;will-change:transform;transform:translateZ(0)">
<div id="menubar-text" style="position:absolute;left:0;top:0;color:#1c1c1c"><span class="t" style="left:31.9px;top:1.4px;font-size:8.4px;font-weight:bold;letter-spacing:0.014px;">Illustrator CC</span><span class="t" style="left:96.7px;top:1.4px;font-size:8.4px;letter-spacing:-0.259px;">File</span><span class="t" style="left:120.6px;top:1.4px;font-size:8.4px;letter-spacing:-0.194px;">Edit</span><span class="t" style="left:145.4px;top:1.4px;font-size:8.4px;letter-spacing:0.054px;">Object</span><span class="t" style="left:181.2px;top:1.4px;font-size:8.4px;letter-spacing:-0.053px;">Type</span><span class="t" style="left:209.8px;top:1.4px;font-size:8.4px;letter-spacing:0.059px;">Select</span><span class="t" style="left:244.6px;top:1.4px;font-size:8.4px;letter-spacing:0.096px;">Effect</span><span class="t" style="left:278px;top:1.4px;font-size:8.4px;letter-spacing:-0.014px;">View</span><span class="t" style="left:307px;top:1.4px;font-size:8.4px;letter-spacing:0.054px;">Window</span><span class="t" style="left:347.8px;top:1.4px;font-size:8.4px;letter-spacing:-0.019px;">Help</span><span class="t" style="left:831.6px;top:1.4px;font-size:8.4px;letter-spacing:-0.066px;">Mon 12:54</span><span class="t" style="left:881.2px;top:1.4px;font-size:8.4px;font-weight:bold;letter-spacing:-0.255px;">Ben O&#39;Brien</span></div>
<span class="t" style="left:44px;top:14.6px;font-size:13px;color:#ad9173;font-weight:bold;line-height:16px;height:16px;transform:scaleX(0.84);transform-origin:0 0;">Ai</span><span class="t" style="left:69.6px;top:18.9px;font-size:6.6px;color:#4a4a4a;font-weight:bold;">Br</span><span class="t" style="left:90.6px;top:18.9px;font-size:6.6px;color:#4a4a4a;font-weight:bold;">St</span><span class="t" style="left:808.3px;top:18.4px;font-size:8.2px;color:#ececec;font-weight:bold;letter-spacing:-0.407px;">Essentials</span><span class="t" style="left:882.7px;top:18.7px;font-size:7.4px;color:#8c8c8c;letter-spacing:-0.336px;">Search Adobe Stock</span>
<span class="t" style="left:6.9px;top:39.3px;font-size:7px;color:#dcdcdc;letter-spacing:-0.366px;">No Selection</span><span class="t" style="left:91.6px;top:38.5px;font-size:6.4px;color:#fff;font-weight:bold;">E</span><span class="t" style="left:117.6px;top:39.3px;font-size:7px;color:#e4e4e4;letter-spacing:-0.468px;border-bottom:1px solid #cfcfcf;height:8.4px;line-height:10px;">Stroke:</span><span class="t" style="left:152.5px;top:39.3px;font-size:7px;color:#e4e4e4;letter-spacing:-0.087px;">3.753 pt</span><span class="t" style="left:221.8px;top:39.3px;font-size:7px;color:#222;letter-spacing:-0.301px;">Uniform</span><span class="t" style="left:276px;top:39.3px;font-size:7px;color:#222;letter-spacing:-0.290px;">5 pt. Round</span><span class="t" style="left:326.9px;top:39.3px;font-size:7px;color:#e4e4e4;letter-spacing:-0.297px;border-bottom:1px dotted #999;height:8.4px;">Opacity:</span><span class="t" style="left:356.3px;top:39.3px;font-size:7px;color:#e4e4e4;letter-spacing:-0.801px;">100%</span><span class="t" style="left:401.7px;top:39.3px;font-size:7px;color:#dcdcdc;letter-spacing:-0.493px;">Style</span><span class="t" style="left:455.6px;top:39.3px;font-size:7px;color:#f0f0f0;letter-spacing:-0.410px;">Document Setup</span><span class="t" style="left:516.8px;top:39.3px;font-size:7px;color:#f0f0f0;letter-spacing:-0.467px;">Preferences</span>
<span class="t" style="left:55.6px;top:57.1px;font-size:7px;color:#f2f2f2;font-weight:bold;letter-spacing:-0.402px;">TUTORIAL 01.ai* @ 121.55% (RGB/Preview)</span>
<span class="t" style="left:45px;top:604.3px;font-size:7px;color:#e0e0e0;letter-spacing:-0.376px;">121.55%</span><span class="t" style="left:110px;top:604.3px;font-size:7px;color:#e0e0e0;">1</span><span class="t" style="left:212.5px;top:604.3px;font-size:7px;color:#d0d0d0;letter-spacing:-0.422px;">Selection</span>
</div>
</body>
</html>
